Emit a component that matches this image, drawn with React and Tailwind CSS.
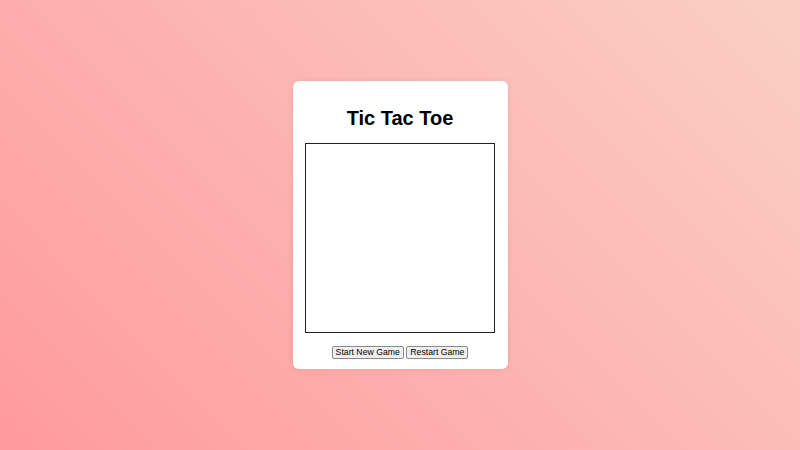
import React from 'react';

const font = { fontFamily: '"Liberation Sans", Arial, sans-serif' };

export default function App() {
  return (
    <div
      className="w-[800px] h-[450px] flex items-center justify-center bg-[linear-gradient(45deg,#ff9a9e_0%,#fad0c4_100%)]"
      style={font}
    >
      {/* Card */}
      <div className="w-[215px] bg-white rounded-[6px] shadow-[0_0_6px_rgba(0,0,0,0.08)] px-[12.5px] pt-[12.5px] pb-[10.5px] flex flex-col items-center">
        <h1 className="text-[20px] leading-[23px] font-bold text-black mt-[13.5px] mb-[13px]">Tic Tac Toe</h1>

        {/* Board */}
        <div className="w-[190px] h-[190px] border-[1.4px] border-[#222] bg-white" />

        {/* Controls */}
        <div className="mt-[13px] flex items-center gap-[2.5px]">
          <button className="h-[12.5px] px-[3px] text-[8.7px] leading-none text-black bg-[#efefef] border-[0.75px] border-[#8a8a8a] rounded-[2px]">
            Start New Game
          </button>
          <button className="h-[12.5px] px-[3px] text-[8.7px] leading-none text-black bg-[#efefef] border-[0.75px] border-[#8a8a8a] rounded-[2px]">
            Restart Game
          </button>
        </div>
      </div>
    </div>
  );
}
